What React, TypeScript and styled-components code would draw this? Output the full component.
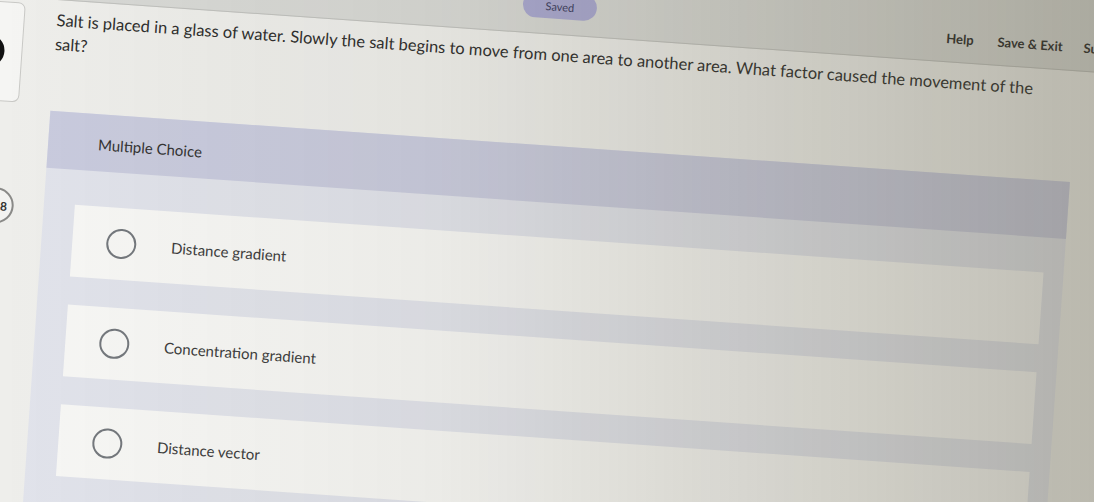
import styled, { createGlobalStyle } from "styled-components";

const GlobalStyle = createGlobalStyle`
  html, body {
    margin: 0;
    padding: 0;
    width: 100%;
    height: 100%;
    overflow: hidden;
    background: #eeeeeb;
  }
  body {
    font-family: Lato, "Open Sans", "Liberation Sans", sans-serif;
  }
  /* photo lighting: the screen gets darker to the right */
  body::after {
    content: "";
    position: fixed;
    inset: 0;
    z-index: 10;
    pointer-events: none;
    background: linear-gradient(
      90deg,
      rgba(90, 85, 60, 0) 0%,
      rgba(90, 85, 60, 0.07) 40%,
      rgba(90, 85, 60, 0.35) 100%
    );
  }
`;

// whole screen is tilted in the photo
const Stage = styled.div`
  width: 1140px;
  height: 600px;
  transform-origin: 0 0;
  transform: rotate(4deg) translateY(-80px);
  display: flex;
  flex-direction: column;
  background: #eeeeeb;
`;

const Header = styled.header`
  box-sizing: border-box;
  height: 76px;
  flex-shrink: 0;
  display: flex;
  align-items: flex-end;
  padding: 0 15px 11px 522px;
  background: #d8d9d6;
  border-bottom: 1px solid #c0c1be;
`;

const SavedPill = styled.div`
  width: 74px;
  height: 26px;
  margin-bottom: 4px;
  border-radius: 13px;
  background: #aaa9d2;
  color: #3a3a5e;
  font-size: 11px;
  display: flex;
  align-items: center;
  justify-content: center;
`;

const Spacer = styled.div`
  flex: 1;
`;

const HeaderLink = styled.span<{ gap?: number }>`
  height: 24px;
  line-height: 24px;
  margin-left: ${(p) => p.gap ?? 0}px;
  font-size: 13px;
  font-weight: 700;
  color: #2b2b2b;
  white-space: nowrap;
`;

const Body = styled.div`
  display: flex;
`;

const Rail = styled.aside`
  width: 28px;
  flex-shrink: 0;
  display: flex;
  flex-direction: column;
  align-items: flex-end;
`;

const SideCard = styled.div`
  box-sizing: border-box;
  width: 86px;
  height: 100px;
  margin: 5px 2px 0 0;
  border: 1px solid #c9c9c6;
  border-radius: 7px;
  background: #f5f5f3;
  display: flex;
  align-items: center;
`;

const Dot = styled.div`
  width: 32px;
  height: 32px;
  margin-left: 35px;
  border-radius: 50%;
  background: #111;
`;

const NumberBadge = styled.div`
  box-sizing: border-box;
  width: 36px;
  height: 36px;
  margin-top: 86px;
  padding-left: 9px;
  border: 2px solid #8a8a88;
  border-radius: 50%;
  background: #f3f3f1;
  color: #333;
  font-size: 12px;
  font-weight: 700;
  display: flex;
  align-items: center;
  justify-content: center;
`;

const Main = styled.main`
  width: 1022px;
  margin-left: 30px;
  display: flex;
  flex-direction: column;
`;

const Question = styled.p`
  margin: 8px 0 0;
  max-width: 1000px;
  font-size: 16.5px;
  line-height: 24px;
  color: #2e2e2e;
`;

const Panel = styled.section`
  margin-top: 55px;
  padding-bottom: 30px;
  background: #e1e3eb;
`;

const PanelHeader = styled.div`
  box-sizing: border-box;
  height: 57px;
  padding: 2px 0 0 50px;
  display: flex;
  align-items: center;
  background: #c9cbde;
  font-size: 15px;
  color: #333;
`;

const OptionList = styled.div`
  padding: 35px 20px 0 31px;
  display: flex;
  flex-direction: column;
  gap: 28px;
`;

const OptionCard = styled.label`
  height: 72px;
  padding-left: 34px;
  display: flex;
  align-items: center;
  background: #f7f7f5;
`;

const Radio = styled.span`
  box-sizing: border-box;
  width: 30px;
  height: 30px;
  margin-right: 35px;
  flex-shrink: 0;
  border: 2px solid #74787d;
  border-radius: 50%;
`;

const OptionText = styled.span`
  font-size: 15px;
  color: #3d3d3d;
`;

const OPTIONS = ["Distance gradient", "Concentration gradient", "Distance vector"];

export default function App() {
  return (
    <>
      <GlobalStyle />
      <Stage>
        <Header>
          <SavedPill>Saved</SavedPill>
          <Spacer />
          <HeaderLink>Help</HeaderLink>
          <HeaderLink gap={24}>Save &amp; Exit</HeaderLink>
          <HeaderLink gap={21}>Submit</HeaderLink>
        </Header>
        <Body>
          <Rail>
            <SideCard>
              <Dot />
            </SideCard>
            <NumberBadge>18</NumberBadge>
          </Rail>
          <Main>
            <Question>
              Salt is placed in a glass of water. Slowly the salt begins to move
              from one area to another area. What factor caused the movement of
              the salt?
            </Question>
            <Panel>
              <PanelHeader>Multiple Choice</PanelHeader>
              <OptionList>
                {OPTIONS.map((o) => (
                  <OptionCard key={o}>
                    <Radio />
                    <OptionText>{o}</OptionText>
                  </OptionCard>
                ))}
              </OptionList>
            </Panel>
          </Main>
        </Body>
      </Stage>
    </>
  );
}
